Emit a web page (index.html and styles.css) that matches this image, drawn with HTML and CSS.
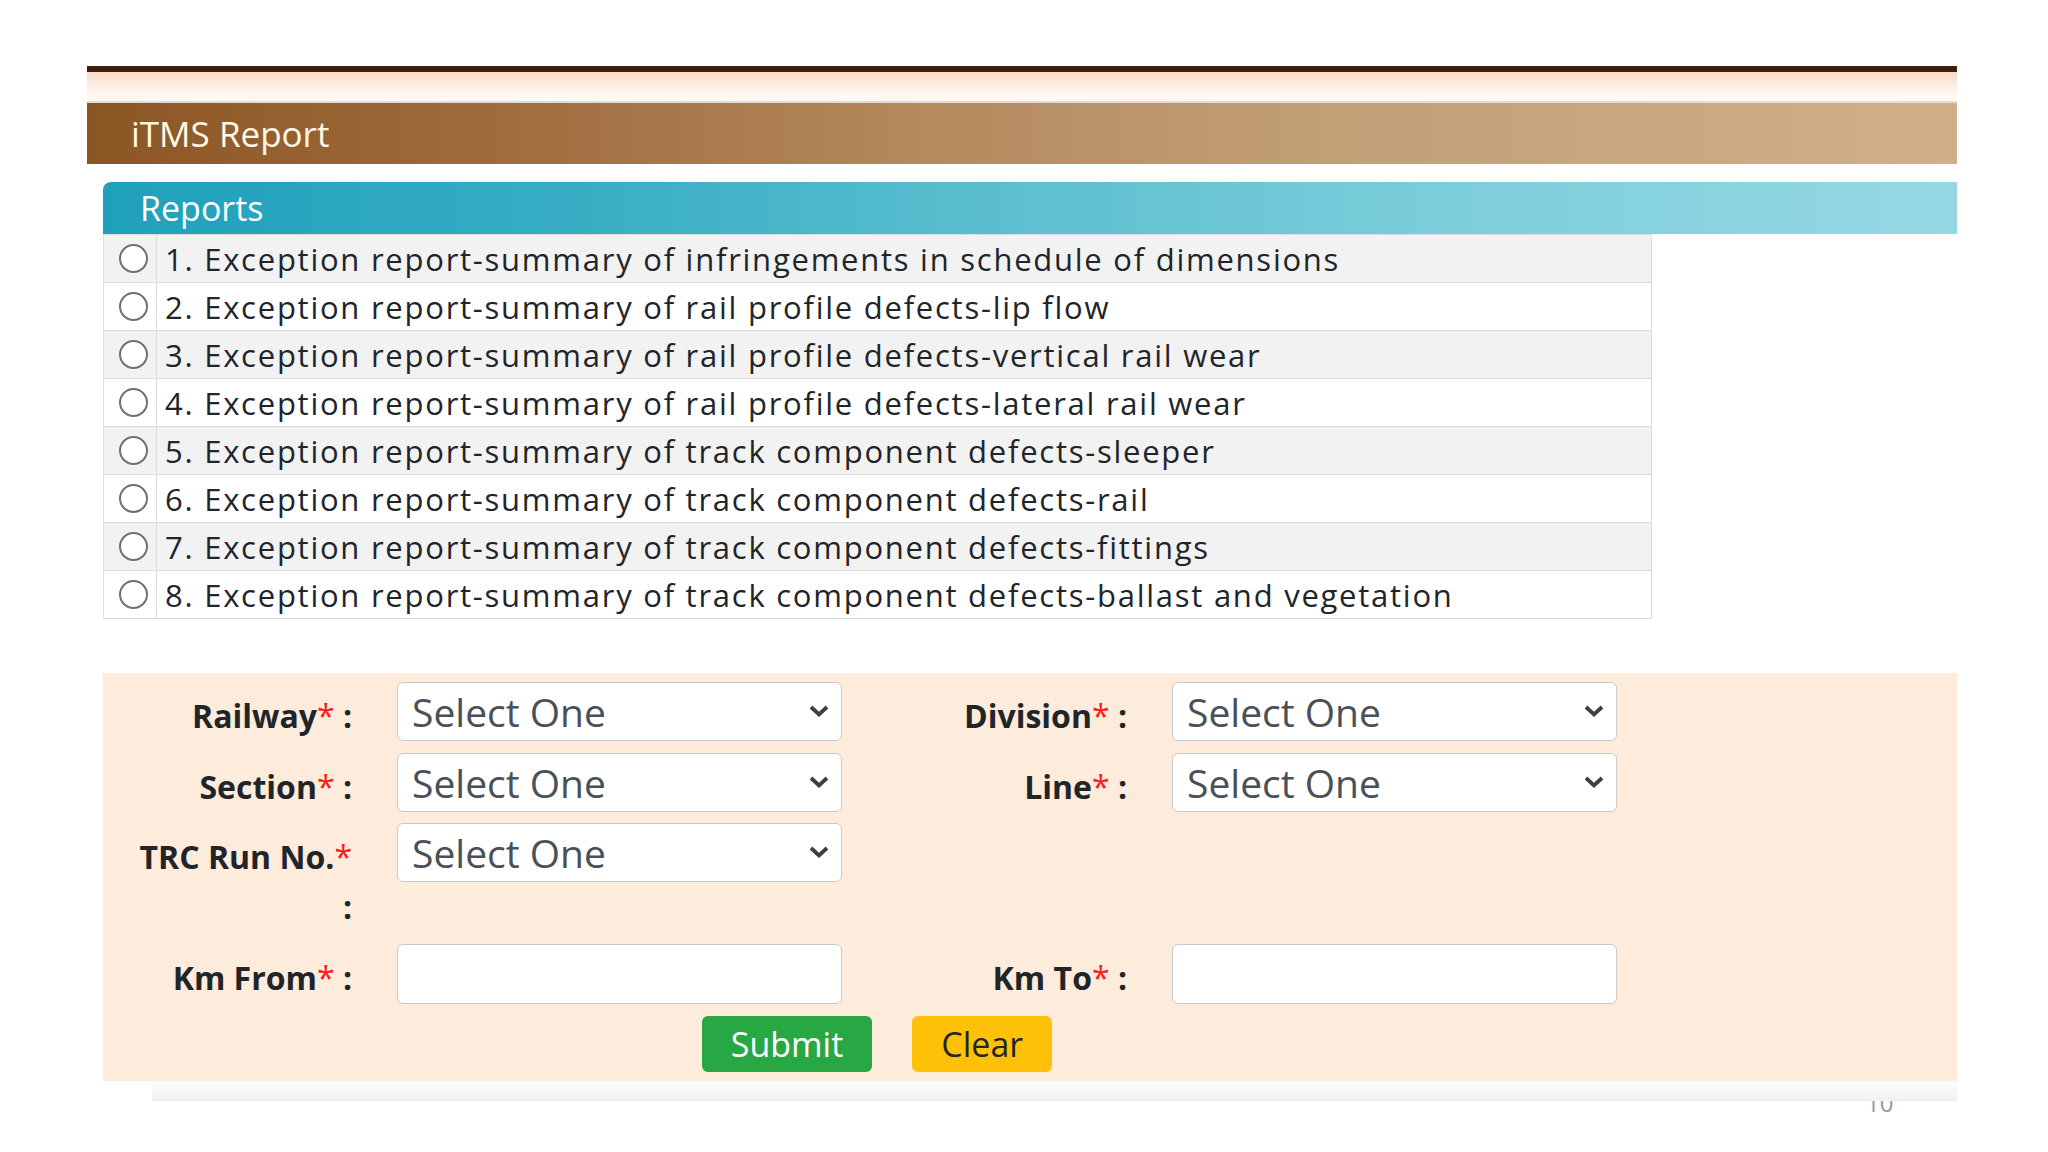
FILE: index.html
```html
<!DOCTYPE html>
<html lang="en">
<head>
<meta charset="utf-8">
<title>iTMS Report</title>
<link rel="stylesheet" href="styles.css">
</head>
<body>
<div class="page">
  <div class="topbar"></div>
  <div class="band"></div>
  <div class="title">iTMS Report</div>

  <div class="reports">
    <div class="reports-head">Reports</div>
    <table class="report-list">
      <tr><td class="rc"><input class="radio" type="radio" name="rep"></td><td class="rt">1. Exception report-summary of infringements in schedule of dimensions</td></tr>
      <tr><td class="rc"><input class="radio" type="radio" name="rep"></td><td class="rt">2. Exception report-summary of rail profile defects-lip flow</td></tr>
      <tr><td class="rc"><input class="radio" type="radio" name="rep"></td><td class="rt">3. Exception report-summary of rail profile defects-vertical rail wear</td></tr>
      <tr><td class="rc"><input class="radio" type="radio" name="rep"></td><td class="rt">4. Exception report-summary of rail profile defects-lateral rail wear</td></tr>
      <tr><td class="rc"><input class="radio" type="radio" name="rep"></td><td class="rt">5. Exception report-summary of track component defects-sleeper</td></tr>
      <tr><td class="rc"><input class="radio" type="radio" name="rep"></td><td class="rt">6. Exception report-summary of track component defects-rail</td></tr>
      <tr><td class="rc"><input class="radio" type="radio" name="rep"></td><td class="rt">7. Exception report-summary of track component defects-fittings</td></tr>
      <tr><td class="rc"><input class="radio" type="radio" name="rep"></td><td class="rt">8. Exception report-summary of track component defects-ballast and vegetation</td></tr>
    </table>
  </div>

  <div class="form-panel">
    <div class="form-inner">
      <div class="grid">
        <label class="lbl">Railway<span class="req">*</span> :</label>
        <div class="sel"><select><option>Select One</option></select><svg class="chev" viewBox="0 0 22 14"><path d="M3 3 L11 10.5 L19 3"/></svg></div>
        <label class="lbl">Division<span class="req">*</span> :</label>
        <div class="sel"><select><option>Select One</option></select><svg class="chev" viewBox="0 0 22 14"><path d="M3 3 L11 10.5 L19 3"/></svg></div>

        <label class="lbl">Section<span class="req">*</span> :</label>
        <div class="sel"><select><option>Select One</option></select><svg class="chev" viewBox="0 0 22 14"><path d="M3 3 L11 10.5 L19 3"/></svg></div>
        <label class="lbl">Line<span class="req">*</span> :</label>
        <div class="sel"><select><option>Select One</option></select><svg class="chev" viewBox="0 0 22 14"><path d="M3 3 L11 10.5 L19 3"/></svg></div>

        <label class="lbl">TRC Run No.<span class="req">*</span> :</label>
        <div class="sel"><select><option>Select One</option></select><svg class="chev" viewBox="0 0 22 14"><path d="M3 3 L11 10.5 L19 3"/></svg></div>
        <div></div>
        <div></div>

        <label class="lbl">Km From<span class="req">*</span> :</label>
        <input class="txt" type="text">
        <label class="lbl">Km To<span class="req">*</span> :</label>
        <input class="txt" type="text">
      </div>
      <div class="buttons">
        <button class="btn submit" type="button">Submit</button>
        <button class="btn clear" type="button">Clear</button>
      </div>
    </div>
  </div>
  <div class="shadow"></div>
  <div class="pgnum"><span>10</span></div>
</div>
</body>
</html>
```

FILE: styles.css
```css
html, body {
  margin: 0;
  padding: 0;
  background: #ffffff;
}

body {
  font-family: "Open Sans", "Noto Sans", "Liberation Sans", sans-serif;
  color: #212529;
}

.page {
  padding-top: 66px;
  margin-left: 87px;
  width: 1870px;
}

.topbar {
  height: 6px;
  background: #3f1e08;
}

.band {
  height: 29px;
  background: linear-gradient(to bottom, #fbdac6 0%, #fdebe0 40%, #fff7f1 80%, #fffaf6 100%);
  border-bottom: 2px solid #e4dcd4;
}

.title {
  height: 61px;
  display: flex;
  align-items: center;
  padding-left: 44px;
  font-size: 35px;
  color: #fff8e6;
  background: linear-gradient(to right, #8b5524 0%, #a06c3d 22%, #b48a5e 45%, #c29e75 65%, #d0b089 100%);
}

.reports {
  margin-top: 18px;
  margin-left: 16px;
}

.reports-head {
  height: 52px;
  display: flex;
  align-items: center;
  padding-left: 37px;
  font-size: 34px;
  color: #ffffff;
  border-top-left-radius: 8px;
  background: linear-gradient(to right, #1fa0ba 0%, #36adc4 25%, #5ec0d0 50%, #7fcfdc 75%, #95d8e3 100%);
}

.report-list {
  width: 1549px;
  border-collapse: collapse;
}

.report-list tr {
  height: 48px;
}

.report-list tr:nth-child(odd) {
  background: #f2f2f2;
}

.report-list tr:nth-child(even) {
  background: #ffffff;
}

.report-list td {
  border: 1px solid #dcdcdc;
  padding: 0;
  vertical-align: middle;
}

.rc {
  width: 52px;
  text-align: center;
}

.report-list .rt {
  padding-left: 8px;
  font-size: 31px;
  letter-spacing: 1.75px;
  line-height: 46px;
  color: #212529;
  white-space: nowrap;
}

.radio {
  appearance: none;
  -webkit-appearance: none;
  width: 29px;
  height: 29px;
  margin: 0;
  border: 2px solid #707070;
  border-radius: 50%;
  background: #ffffff;
  display: block;
  margin-left: 15px;
  box-sizing: border-box;
}

.form-panel {
  margin-top: 54px;
  margin-left: 16px;
  width: 1854px;
  background: #fdecdb;
  padding: 9px 0 9px 0;
}

.form-inner {
  width: 1548px;
}

.grid {
  display: grid;
  grid-template-columns: 224px 445px 240px 445px;
  column-gap: 45px;
  row-gap: 11.5px;
  padding-left: 25px;
  align-items: start;
}

.lbl {
  text-align: right;
  font-size: 32px;
  font-weight: 700;
  line-height: 50px;
  padding-top: 9px;
  color: #212529;
}

.req {
  color: #ff1a1a;
  font-weight: 400;
}

.sel {
  position: relative;
  height: 59px;
}

.sel select {
  appearance: none;
  -webkit-appearance: none;
  width: 100%;
  height: 59px;
  box-sizing: border-box;
  border: 1.5px solid #c9c9c9;
  border-radius: 6px;
  background: #ffffff;
  padding: 0 0 0 14px;
  margin: 0;
  font-family: "Open Sans", "Noto Sans", "Liberation Sans", sans-serif;
  font-size: 39px;
  color: #495057;
}

.chev {
  position: absolute;
  right: 12px;
  top: 22px;
  width: 22px;
  height: 14px;
  pointer-events: none;
}

.chev path {
  fill: none;
  stroke: #3f3f3f;
  stroke-width: 3.8;
}

.txt {
  width: 100%;
  height: 60px;
  box-sizing: border-box;
  border: 1.5px solid #c9c9c9;
  border-radius: 6px;
  background: #ffffff;
  margin: 0;
  padding: 0 14px;
  font-size: 30px;
}

.buttons {
  display: flex;
  justify-content: center;
  gap: 40px;
  margin-top: 12.5px;
}

.btn {
  height: 56px;
  border: none;
  border-radius: 6px;
  padding: 0 29px;
  margin: 0;
  font-family: "Open Sans", "Noto Sans", "Liberation Sans", sans-serif;
  font-size: 34px;
  line-height: 56px;
}

.submit {
  background: #28a745;
  color: #ffffff;
}

.clear {
  background: #ffc107;
  color: #212529;
}

.shadow {
  height: 20px;
  margin-left: 65px;
  background: linear-gradient(to bottom, #fbfbfb 0%, #f6f6f6 70%, #eeeeee 100%);
}

.pgnum {
  margin-left: 1779px;
  height: 12px;
  overflow: hidden;
  font-size: 24px;
  color: #9a9a9a;
}

.pgnum span {
  display: block;
  line-height: 24px;
  margin-top: -10px;
}
```
